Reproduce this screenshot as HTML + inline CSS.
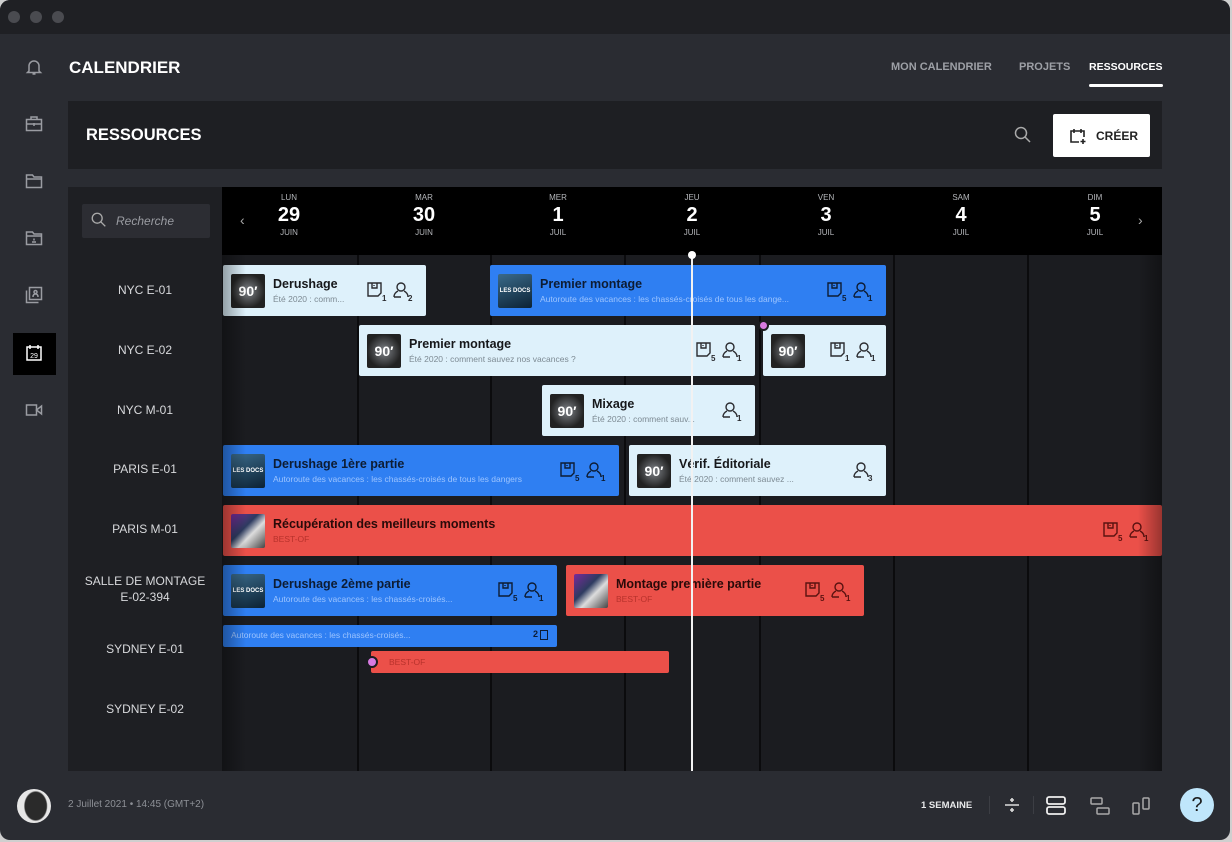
<!DOCTYPE html>
<html><head><meta charset="utf-8"><style>
*{box-sizing:border-box;margin:0;padding:0}
body{width:1232px;height:842px;background:#cfcfcf;font-family:"Liberation Sans",sans-serif;position:relative;overflow:hidden}
.win{position:absolute;left:0;top:0;width:1230px;height:840px;background:#2a2c32;border-radius:10px;overflow:hidden}
.tb{position:absolute;left:0;top:0;width:100%;height:34px;background:#1f2024}
.dot{position:absolute;top:11px;width:12px;height:12px;border-radius:50%;background:#4a4b50}
.a{position:absolute}
.ic{position:absolute;stroke:#9a9ca2;fill:none;stroke-width:1.5}
.nav{position:absolute;top:61px;font-size:11px;color:#9da0a6;font-weight:bold;white-space:nowrap}
.lab{position:absolute;left:68px;width:154px;text-align:center;color:#d8d9dc;font-size:12px;line-height:16px}
.dh{position:absolute;top:193px;width:60px;text-align:center;color:#fff}
.dh .s{font-size:8px;color:#b5b7bb}
.dh .n{font-size:20px;font-weight:bold;line-height:26px}
.ev{position:absolute;height:51px;border-radius:2px}
.L{background:#def1fb}
.B{background:#2f7ff2}
.R{background:#eb5049}
.th{position:absolute;left:8px;top:9px;width:34px;height:34px;border-radius:2px}
.t90{background:radial-gradient(circle at 50% 50%,#7e8288,#222 70%);color:#fff;font-weight:bold;font-size:14px;line-height:34px;text-align:center}
.tdoc{background:linear-gradient(160deg,#3a6a8a,#0c2234);color:#fff;font-size:6px;font-weight:bold;line-height:34px;text-align:center}
.tbo{background:linear-gradient(135deg,#7a2a9a,#2d3b60 40%,#ddd 60%,#444)}
.ti{position:absolute;left:50px;top:12px;font-size:12.5px;font-weight:bold;white-space:nowrap}
.su{position:absolute;left:50px;top:29px;font-size:8.5px;white-space:nowrap}
.L .ti{color:#16171a}.L .su{color:#7d8a93}
.B .ti{color:#0d1c33}.B .su{color:#9cc4ff}
.R .ti{color:#2a0a09}.R .su{color:#b8322c}
.icn{position:absolute;top:16px;width:26px;height:24px}
.icn svg{stroke-width:1.4;fill:none}
.icn b{position:absolute;left:16px;top:13px;font-size:8px}
.L .icn svg{stroke:#2b2c30}.L .icn b{color:#2b2c30}
.B .icn svg{stroke:#0d1c33}.B .icn b{color:#0d1c33}
.R .icn svg{stroke:#5a1210}.R .icn b{color:#5a1210}
.vl{position:absolute;top:255px;width:2px;height:516px;background:#0b0b0d}
</style></head><body>
<div class="win">
<div class="tb"><div class="dot" style="left:8px"></div><div class="dot" style="left:30px"></div><div class="dot" style="left:52px"></div></div>

<svg class="ic" style="left:24px;top:57px" width="20" height="20" viewBox="0 0 20 20"><path d="M5 14V9a5 5 0 0 1 10 0v5l1.5 1.5h-13zM8.5 17h3"/></svg>
<svg class="ic" style="left:24px;top:114px" width="20" height="20" viewBox="0 0 20 20"><rect x="2.5" y="5.5" width="15" height="11"/><path d="M7 5.5V3h6v2.5M2.5 10h15M10 9v3"/></svg>
<svg class="ic" style="left:24px;top:171px" width="20" height="20" viewBox="0 0 20 20"><path d="M2.5 4h6l1.5 2h7.5v10.5h-15zM2.5 8h15"/></svg>
<svg class="ic" style="left:24px;top:228px" width="20" height="20" viewBox="0 0 20 20"><path d="M2.5 4h6l1.5 2h7.5v10.5h-15zM2.5 8h15M8 14h4M10 10.5v2"/></svg>
<svg class="ic" style="left:24px;top:285px" width="20" height="20" viewBox="0 0 20 20"><rect x="5.5" y="2.5" width="12" height="12"/><path d="M2.5 5.5v12h12M9 12c0-2 1-3 2.5-3s2.5 1 2.5 3"/><circle cx="11.5" cy="7" r="1.5"/></svg>
<div class="a" style="left:13px;top:333px;width:43px;height:42px;background:#000"></div>
<svg class="ic" style="left:24px;top:343px;stroke:#fff" width="20" height="20" viewBox="0 0 20 20"><rect x="3" y="4" width="14" height="13"/><path d="M6 2v4M14 2v4"/><text x="10" y="15" font-size="7" fill="#fff" stroke="none" text-anchor="middle" font-family="Liberation Sans">29</text></svg>
<svg class="ic" style="left:24px;top:400px" width="20" height="20" viewBox="0 0 20 20"><rect x="2.5" y="5" width="10" height="10"/><path d="M12.5 10l5-4v8z"/></svg>

<div class="a" style="left:69px;top:58px;color:#fff;font-size:17px;font-weight:bold">CALENDRIER</div>
<div class="nav" style="left:891px">MON CALENDRIER</div>
<div class="nav" style="left:1019px">PROJETS</div>
<div class="nav" style="left:1089px;color:#fff;font-size:10.5px">RESSOURCES</div>
<div class="a" style="left:1089px;top:84px;width:74px;height:3px;background:#fff;border-radius:2px"></div>

<div class="a" style="left:68px;top:101px;width:1094px;height:68px;background:#1e1f23"></div>
<div class="a" style="left:86px;top:126px;color:#fff;font-size:16.5px;font-weight:bold">RESSOURCES</div>
<svg class="ic" style="left:1013px;top:125px;stroke:#aaa" width="20" height="20" viewBox="0 0 20 20"><circle cx="8" cy="8" r="5.5"/><path d="M12 12l5 5"/></svg>
<div class="a" style="left:1053px;top:114px;width:97px;height:43px;background:#fff;border-radius:2px"></div>
<svg class="a" style="left:1068px;top:126px" width="20" height="20" viewBox="0 0 20 20" fill="none" stroke="#222" stroke-width="1.6"><path d="M11 16H3V5h13v6M6 3v4M13 3v4M15 13v5M12.5 15.5h5"/></svg>
<div class="a" style="left:1096px;top:129px;font-size:12px;font-weight:bold;color:#222">CRÉER</div>

<div class="a" style="left:68px;top:187px;width:154px;height:584px;background:#1e1f23"></div>
<div class="a" style="left:222px;top:187px;width:940px;height:68px;background:#000"></div>
<div class="a" style="left:222px;top:255px;width:940px;height:516px;background:#1b1c20"></div>
<div class="a" style="left:82px;top:204px;width:128px;height:34px;background:#2c2d33;border-radius:2px"></div>
<svg class="ic" style="left:90px;top:211px;stroke:#aaa" width="18" height="18" viewBox="0 0 20 20"><circle cx="8" cy="8" r="5.5"/><path d="M12 12l5 5"/></svg>
<div class="a" style="left:116px;top:214px;font-size:12px;color:#9a9ca2;font-style:italic">Recherche</div>
<div class="a" style="left:240px;top:212px;color:#aaa;font-size:14px">‹</div>
<div class="a" style="left:1138px;top:212px;color:#aaa;font-size:14px">›</div>

<div class="dh" style="left:259px"><div class="s">LUN</div><div class="n">29</div><div class="s">JUIN</div></div>
<div class="dh" style="left:394px"><div class="s">MAR</div><div class="n">30</div><div class="s">JUIN</div></div>
<div class="dh" style="left:528px"><div class="s">MER</div><div class="n">1</div><div class="s">JUIL</div></div>
<div class="dh" style="left:662px"><div class="s">JEU</div><div class="n">2</div><div class="s">JUIL</div></div>
<div class="dh" style="left:796px"><div class="s">VEN</div><div class="n">3</div><div class="s">JUIL</div></div>
<div class="dh" style="left:931px"><div class="s">SAM</div><div class="n">4</div><div class="s">JUIL</div></div>
<div class="dh" style="left:1065px"><div class="s">DIM</div><div class="n">5</div><div class="s">JUIL</div></div>

<div class="vl" style="left:357px"></div><div class="vl" style="left:490px"></div><div class="vl" style="left:624px"></div><div class="vl" style="left:759px"></div><div class="vl" style="left:893px"></div><div class="vl" style="left:1027px"></div>

<div class="lab" style="top:282px">NYC E-01</div>
<div class="lab" style="top:342px">NYC E-02</div>
<div class="lab" style="top:402px">NYC M-01</div>
<div class="lab" style="top:461px">PARIS E-01</div>
<div class="lab" style="top:521px">PARIS M-01</div>
<div class="lab" style="top:573px">SALLE DE MONTAGE<br>E-02-394</div>
<div class="lab" style="top:641px">SYDNEY E-01</div>
<div class="lab" style="top:701px">SYDNEY E-02</div>

<div class="ev L" style="left:223px;top:265px;width:203px"><div class="th t90">90′</div><div class="ti">Derushage</div><div class="su">Été 2020 : comm...</div>
<div class="icn" style="left:143px"><svg width="18" height="18" viewBox="0 0 18 18"><path d="M2 2h13v10l-3 3H2zM6 2v5h5V2M8 4v1"/></svg><b>1</b></div>
<div class="icn" style="left:169px"><svg width="18" height="18" viewBox="0 0 18 18"><circle cx="9" cy="6" r="4"/><path d="M2 16c0-3 2-5 4-6M16 16c0-3-2-5-4-6M2 16h7"/></svg><b>2</b></div></div>

<div class="ev B" style="left:490px;top:265px;width:396px"><div class="th tdoc">LES DOCS</div><div class="ti">Premier montage</div><div class="su">Autoroute des vacances : les chassés-croisés de tous les dange...</div>
<div class="icn" style="left:336px"><svg width="18" height="18" viewBox="0 0 18 18"><path d="M2 2h13v10l-3 3H2zM6 2v5h5V2M8 4v1"/></svg><b>5</b></div>
<div class="icn" style="left:362px"><svg width="18" height="18" viewBox="0 0 18 18"><circle cx="9" cy="6" r="4"/><path d="M2 16c0-3 2-5 4-6M16 16c0-3-2-5-4-6M2 16h7"/></svg><b>1</b></div></div>

<div class="ev L" style="left:359px;top:325px;width:396px"><div class="th t90">90′</div><div class="ti">Premier montage</div><div class="su">Été 2020 : comment sauvez nos vacances ?</div>
<div class="icn" style="left:336px"><svg width="18" height="18" viewBox="0 0 18 18"><path d="M2 2h13v10l-3 3H2zM6 2v5h5V2M8 4v1"/></svg><b>5</b></div>
<div class="icn" style="left:362px"><svg width="18" height="18" viewBox="0 0 18 18"><circle cx="9" cy="6" r="4"/><path d="M2 16c0-3 2-5 4-6M16 16c0-3-2-5-4-6M2 16h7"/></svg><b>1</b></div></div>

<div class="ev L" style="left:763px;top:325px;width:123px"><div class="th t90">90′</div>
<div class="icn" style="left:66px"><svg width="18" height="18" viewBox="0 0 18 18"><path d="M2 2h13v10l-3 3H2zM6 2v5h5V2M8 4v1"/></svg><b>1</b></div>
<div class="icn" style="left:92px"><svg width="18" height="18" viewBox="0 0 18 18"><circle cx="9" cy="6" r="4"/><path d="M2 16c0-3 2-5 4-6M16 16c0-3-2-5-4-6M2 16h7"/></svg><b>1</b></div></div>
<div class="a" style="left:758px;top:320px;width:11px;height:11px;border-radius:50%;background:#d77ae0;border:2px solid #1b1c20"></div>

<div class="ev L" style="left:542px;top:385px;width:213px"><div class="th t90">90′</div><div class="ti">Mixage</div><div class="su">Été 2020 : comment sauv...</div>
<div class="icn" style="left:179px"><svg width="18" height="18" viewBox="0 0 18 18"><circle cx="9" cy="6" r="4"/><path d="M2 16c0-3 2-5 4-6M16 16c0-3-2-5-4-6M2 16h7"/></svg><b>1</b></div></div>

<div class="ev B" style="left:223px;top:445px;width:396px"><div class="th tdoc">LES DOCS</div><div class="ti">Derushage 1ère partie</div><div class="su">Autoroute des vacances : les chassés-croisés de tous les dangers</div>
<div class="icn" style="left:336px"><svg width="18" height="18" viewBox="0 0 18 18"><path d="M2 2h13v10l-3 3H2zM6 2v5h5V2M8 4v1"/></svg><b>5</b></div>
<div class="icn" style="left:362px"><svg width="18" height="18" viewBox="0 0 18 18"><circle cx="9" cy="6" r="4"/><path d="M2 16c0-3 2-5 4-6M16 16c0-3-2-5-4-6M2 16h7"/></svg><b>1</b></div></div>

<div class="ev L" style="left:629px;top:445px;width:257px"><div class="th t90">90′</div><div class="ti">Vérif. Éditoriale</div><div class="su">Été 2020 : comment sauvez ...</div>
<div class="icn" style="left:223px"><svg width="18" height="18" viewBox="0 0 18 18"><circle cx="9" cy="6" r="4"/><path d="M2 16c0-3 2-5 4-6M16 16c0-3-2-5-4-6M2 16h7"/></svg><b>3</b></div></div>

<div class="ev R" style="left:223px;top:505px;width:939px"><div class="th tbo"></div><div class="ti">Récupération des meilleurs moments</div><div class="su">BEST-OF</div>
<div class="icn" style="left:879px"><svg width="18" height="18" viewBox="0 0 18 18"><path d="M2 2h13v10l-3 3H2zM6 2v5h5V2M8 4v1"/></svg><b>5</b></div>
<div class="icn" style="left:905px"><svg width="18" height="18" viewBox="0 0 18 18"><circle cx="9" cy="6" r="4"/><path d="M2 16c0-3 2-5 4-6M16 16c0-3-2-5-4-6M2 16h7"/></svg><b>1</b></div></div>

<div class="ev B" style="left:223px;top:565px;width:334px"><div class="th tdoc">LES DOCS</div><div class="ti">Derushage 2ème partie</div><div class="su">Autoroute des vacances : les chassés-croisés...</div>
<div class="icn" style="left:274px"><svg width="18" height="18" viewBox="0 0 18 18"><path d="M2 2h13v10l-3 3H2zM6 2v5h5V2M8 4v1"/></svg><b>5</b></div>
<div class="icn" style="left:300px"><svg width="18" height="18" viewBox="0 0 18 18"><circle cx="9" cy="6" r="4"/><path d="M2 16c0-3 2-5 4-6M16 16c0-3-2-5-4-6M2 16h7"/></svg><b>1</b></div></div>

<div class="ev R" style="left:566px;top:565px;width:298px"><div class="th tbo"></div><div class="ti">Montage première partie</div><div class="su">BEST-OF</div>
<div class="icn" style="left:238px"><svg width="18" height="18" viewBox="0 0 18 18"><path d="M2 2h13v10l-3 3H2zM6 2v5h5V2M8 4v1"/></svg><b>5</b></div>
<div class="icn" style="left:264px"><svg width="18" height="18" viewBox="0 0 18 18"><circle cx="9" cy="6" r="4"/><path d="M2 16c0-3 2-5 4-6M16 16c0-3-2-5-4-6M2 16h7"/></svg><b>1</b></div></div>

<div class="a" style="left:223px;top:625px;width:334px;height:22px;background:#2f7ff2;border-radius:2px"></div>
<div class="a" style="left:231px;top:630px;font-size:8.5px;color:#9cc4ff">Autoroute des vacances : les chassés-croisés...</div>
<div class="a" style="left:533px;top:629px;font-size:9px;font-weight:bold;color:#0d1c33">2</div>
<div class="a" style="left:540px;top:630px;width:8px;height:10px;border:1px solid #0d1c33"></div>
<div class="a" style="left:371px;top:651px;width:298px;height:22px;background:#eb5049;border-radius:2px"></div>
<div class="a" style="left:366px;top:656px;width:12px;height:12px;border-radius:50%;background:#d77ae0;border:2px solid #1b1c20"></div>
<div class="a" style="left:389px;top:657px;font-size:8.5px;color:#b8322c">BEST-OF</div>

<div class="a" style="left:222px;top:255px;width:24px;height:516px;background:linear-gradient(90deg,rgba(0,0,0,.35),rgba(0,0,0,0))"></div>
<div class="a" style="left:1138px;top:255px;width:24px;height:516px;background:linear-gradient(90deg,rgba(0,0,0,0),rgba(0,0,0,.35))"></div>

<div class="a" style="left:691px;top:255px;width:2px;height:516px;background:#f2f2f2"></div>
<div class="a" style="left:688px;top:251px;width:8px;height:8px;border-radius:50%;background:#fff"></div>

<div class="a" style="left:17px;top:789px;width:34px;height:34px;border-radius:50%;background:radial-gradient(ellipse 35% 45% at 55% 50%,#2a2a2a 90%,#e6e6e6 100%)"></div>
<div class="a" style="left:68px;top:799px;font-size:10px;color:#8d9096">2 Juillet 2021 • 14:45 (GMT+2)</div>
<div class="a" style="left:921px;top:800px;font-size:9.5px;font-weight:bold;color:#e8e9ea">1 SEMAINE</div>
<div class="a" style="left:989px;top:796px;width:1px;height:18px;background:#3c3e44"></div>
<svg class="a" style="left:1002px;top:795px" width="20" height="20" viewBox="0 0 20 20" fill="none" stroke="#ddd" stroke-width="1.6"><path d="M3 10h14M10 3v4M8 5h4M10 13v4M8 15h4"/></svg>
<div class="a" style="left:1033px;top:796px;width:1px;height:18px;background:#3c3e44"></div>
<svg class="a" style="left:1045px;top:795px" width="22" height="22" viewBox="0 0 22 22" fill="none" stroke="#eee" stroke-width="1.8"><rect x="2" y="2" width="18" height="7" rx="2"/><rect x="2" y="12" width="18" height="7" rx="2"/></svg>
<svg class="a" style="left:1089px;top:795px" width="22" height="22" viewBox="0 0 22 22" fill="none" stroke="#aaa" stroke-width="1.5"><rect x="2" y="3" width="11" height="6" rx="1"/><rect x="8" y="13" width="12" height="6" rx="1"/></svg>
<svg class="a" style="left:1131px;top:795px" width="22" height="22" viewBox="0 0 22 22" fill="none" stroke="#aaa" stroke-width="1.5"><rect x="2" y="8" width="6" height="11" rx="1"/><rect x="12" y="3" width="6" height="11" rx="1"/></svg>
<div class="a" style="left:1180px;top:788px;width:34px;height:34px;border-radius:50%;background:#bfe6fb;color:#1a1a1a;font-size:20px;text-align:center;line-height:34px">?</div>
</div>
</body></html>
